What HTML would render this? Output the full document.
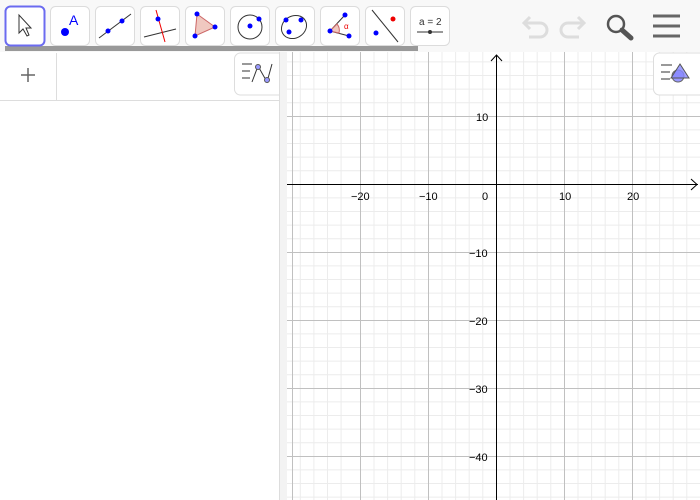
<!DOCTYPE html>
<html><head><style>
body{margin:0;width:700px;height:500px;overflow:hidden;font-family:"Liberation Sans",sans-serif;background:#fff;position:relative}
.tb{position:absolute;left:0;top:0;width:700px;height:52px;background:#f8f8f8}
</style></head><body>
<div class="tb"></div>
<div style="position:absolute;left:5px;top:46px;width:413px;height:5px;background:#999"></div>
<svg width="700" height="500" style="position:absolute;left:0;top:0">
<g fill="#fff" stroke="#dcdcdc">
<rect x="5.5" y="6.5" width="39" height="39" rx="5" stroke="#6b6bf0" stroke-width="2"/>
<rect x="50.5" y="6.5" width="39" height="39" rx="5"/>
<rect x="95.5" y="6.5" width="39" height="39" rx="5"/>
<rect x="140.5" y="6.5" width="39" height="39" rx="5"/>
<rect x="185.5" y="6.5" width="39" height="39" rx="5"/>
<rect x="230.5" y="6.5" width="39" height="39" rx="5"/>
<rect x="275.5" y="6.5" width="39" height="39" rx="5"/>
<rect x="320.5" y="6.5" width="39" height="39" rx="5"/>
<rect x="365.5" y="6.5" width="39" height="39" rx="5"/>
<rect x="410.5" y="6.5" width="39" height="39" rx="5"/>
</g>
<path d="M19 15 L19 33 L23 29 L27 36 L29 35 L26 28 L31 28 Z" fill="#fff" stroke="#333"/>
<circle cx="65" cy="32" r="4" fill="#00f"/><text x="69" y="25" font-size="14" fill="#00f">A</text>
<line x1="99" y1="38" x2="131" y2="14" stroke="#333"/><circle cx="108" cy="31" r="2.5" fill="#00f"/><circle cx="122" cy="21" r="2.5" fill="#00f"/>
<line x1="144" y1="37" x2="176" y2="29" stroke="#333"/><line x1="156" y1="10" x2="165" y2="42" stroke="#e00"/><circle cx="158" cy="19" r="2.5" fill="#00f"/>
<path d="M197 14 L215 27 L195 36 Z" fill="#f0c8c0" stroke="#c66"/><circle cx="197" cy="14" r="2.5" fill="#00f"/><circle cx="215" cy="27" r="2.5" fill="#00f"/><circle cx="195" cy="36" r="2.5" fill="#00f"/>
<circle cx="250" cy="27" r="12" fill="none" stroke="#333"/><circle cx="250" cy="26" r="2.5" fill="#00f"/><circle cx="259" cy="19" r="2.5" fill="#00f"/>
<ellipse cx="294" cy="27" rx="13" ry="11" transform="rotate(-30 294 27)" fill="none" stroke="#333"/><circle cx="286" cy="20" r="2.5" fill="#00f"/><circle cx="301" cy="20" r="2.5" fill="#00f"/><circle cx="289" cy="32" r="2.5" fill="#00f"/>
<path d="M330 31 L345 15 M330 31 L349 36" stroke="#333" fill="none"/><path d="M330 31 L337 24 A10 10 0 0 1 339 33 Z" fill="#f0c8c0" stroke="#c66"/><circle cx="330" cy="31" r="2.5" fill="#00f"/><circle cx="345" cy="15" r="2.5" fill="#00f"/><circle cx="349" cy="36" r="2.5" fill="#00f"/><text x="344" y="29" font-size="8" fill="#e00">α</text>
<line x1="372" y1="10" x2="398" y2="42" stroke="#333"/><circle cx="376" cy="33" r="2.5" fill="#00f"/><circle cx="393" cy="19" r="2.5" fill="#e00"/>
<text x="419" y="25" font-size="10" fill="#333">a = 2</text><line x1="417" y1="32" x2="443" y2="32" stroke="#333"/><circle cx="430" cy="32" r="2" fill="#333"/>
<path d="M524 23 L540 23 A7 7 0 0 1 540 37 L529 37 M530 17 L524 23 L530 29" fill="none" stroke="#ddd" stroke-width="3"/>
<path d="M584 23 L568 23 A7 7 0 0 0 568 37 L579 37 M578 17 L584 23 L578 29" fill="none" stroke="#ddd" stroke-width="3"/>
<circle cx="616" cy="24" r="8" fill="none" stroke="#555" stroke-width="2.5"/><line x1="622" y1="30" x2="631" y2="38" stroke="#555" stroke-width="5" stroke-linecap="round"/>
<g stroke="#666" stroke-width="3"><line x1="653" y1="16" x2="680" y2="16"/><line x1="653" y1="26" x2="680" y2="26"/><line x1="653" y1="36" x2="680" y2="36"/></g>
<line x1="0" y1="100.5" x2="279" y2="100.5" stroke="#ddd"/>
<line x1="56.5" y1="53" x2="56.5" y2="100" stroke="#ddd"/>
<path d="M21 75 H35 M28 68 V82" stroke="#666" stroke-width="1.5"/>
<rect x="234.5" y="53" width="50" height="42" rx="6" fill="#fff" stroke="#ddd"/>
<g stroke="#999" stroke-width="2"><line x1="242" y1="64" x2="252" y2="64"/><line x1="242" y1="71" x2="250" y2="71"/><line x1="242" y1="78" x2="250" y2="78"/></g>
<path d="M252 82 L258 66 L267 82 L272 64" fill="none" stroke="#333"/><circle cx="258" cy="67" r="2.5" fill="#99f" stroke="#555"/><circle cx="267" cy="80" r="2.5" fill="#99f" stroke="#555"/>
<rect x="279" y="52" width="8" height="448" fill="#f3f3f3"/>
<line x1="279.5" y1="52" x2="279.5" y2="500" stroke="#ddd"/>
<g stroke="#ececec">
<line x1="300.3" y1="52" x2="300.3" y2="500"/><line x1="313.9" y1="52" x2="313.9" y2="500"/><line x1="327.5" y1="52" x2="327.5" y2="500"/><line x1="341.1" y1="52" x2="341.1" y2="500"/>
<line x1="374" y1="52" x2="374" y2="500"/><line x1="387.6" y1="52" x2="387.6" y2="500"/><line x1="401.2" y1="52" x2="401.2" y2="500"/><line x1="414.8" y1="52" x2="414.8" y2="500"/>
<line x1="442" y1="52" x2="442" y2="500"/><line x1="455.6" y1="52" x2="455.6" y2="500"/><line x1="469.2" y1="52" x2="469.2" y2="500"/><line x1="482.8" y1="52" x2="482.8" y2="500"/>
<line x1="510" y1="52" x2="510" y2="500"/><line x1="523.6" y1="52" x2="523.6" y2="500"/><line x1="537.2" y1="52" x2="537.2" y2="500"/><line x1="550.8" y1="52" x2="550.8" y2="500"/>
<line x1="578" y1="52" x2="578" y2="500"/><line x1="591.6" y1="52" x2="591.6" y2="500"/><line x1="605.2" y1="52" x2="605.2" y2="500"/><line x1="618.8" y1="52" x2="618.8" y2="500"/>
<line x1="646" y1="52" x2="646" y2="500"/><line x1="659.6" y1="52" x2="659.6" y2="500"/><line x1="673.2" y1="52" x2="673.2" y2="500"/><line x1="686.8" y1="52" x2="686.8" y2="500"/>
<line x1="287" y1="61.9" x2="700" y2="61.9"/><line x1="287" y1="75.5" x2="700" y2="75.5"/><line x1="287" y1="89.1" x2="700" y2="89.1"/><line x1="287" y1="102.7" x2="700" y2="102.7"/>
<line x1="287" y1="129.9" x2="700" y2="129.9"/><line x1="287" y1="143.5" x2="700" y2="143.5"/><line x1="287" y1="157.1" x2="700" y2="157.1"/><line x1="287" y1="170.7" x2="700" y2="170.7"/>
<line x1="287" y1="197.9" x2="700" y2="197.9"/><line x1="287" y1="211.5" x2="700" y2="211.5"/><line x1="287" y1="225.1" x2="700" y2="225.1"/><line x1="287" y1="238.7" x2="700" y2="238.7"/>
<line x1="287" y1="265.9" x2="700" y2="265.9"/><line x1="287" y1="279.5" x2="700" y2="279.5"/><line x1="287" y1="293.1" x2="700" y2="293.1"/><line x1="287" y1="306.7" x2="700" y2="306.7"/>
<line x1="287" y1="333.9" x2="700" y2="333.9"/><line x1="287" y1="347.5" x2="700" y2="347.5"/><line x1="287" y1="361.1" x2="700" y2="361.1"/><line x1="287" y1="374.7" x2="700" y2="374.7"/>
<line x1="287" y1="401.9" x2="700" y2="401.9"/><line x1="287" y1="415.5" x2="700" y2="415.5"/><line x1="287" y1="429.1" x2="700" y2="429.1"/><line x1="287" y1="442.7" x2="700" y2="442.7"/>
<line x1="287" y1="469.9" x2="700" y2="469.9"/><line x1="287" y1="483.5" x2="700" y2="483.5"/><line x1="287" y1="497.1" x2="700" y2="497.1"/>
</g>
<g stroke="#c0c0c0">
<line x1="292.5" y1="52" x2="292.5" y2="500"/><line x1="360.5" y1="52" x2="360.5" y2="500"/><line x1="428.5" y1="52" x2="428.5" y2="500"/><line x1="564.5" y1="52" x2="564.5" y2="500"/><line x1="632.5" y1="52" x2="632.5" y2="500"/>
<line x1="287" y1="116.5" x2="700" y2="116.5"/><line x1="287" y1="252.5" x2="700" y2="252.5"/><line x1="287" y1="320.5" x2="700" y2="320.5"/><line x1="287" y1="388.5" x2="700" y2="388.5"/><line x1="287" y1="456.5" x2="700" y2="456.5"/>
</g>
<g stroke="#000" fill="none">
<line x1="287" y1="184.5" x2="698" y2="184.5"/><path d="M691 179 L697 184.5 L691 190"/>
<line x1="496.5" y1="55" x2="496.5" y2="500"/><path d="M491 61 L496.5 55 L502 61"/>
</g>
<g font-size="11" fill="#000">
<text x="351" y="200">−20</text><text x="419" y="200">−10</text><text x="482" y="200">0</text><text x="559" y="200">10</text><text x="627" y="200">20</text>
<text x="476" y="121">10</text><text x="469" y="257">−10</text><text x="469" y="325">−20</text><text x="469" y="393">−30</text><text x="469" y="461">−40</text>
</g>
<rect x="653.5" y="53" width="52" height="42" rx="6" fill="#fff" stroke="#ddd"/>
<g stroke="#999" stroke-width="2"><line x1="661" y1="65" x2="672" y2="65"/><line x1="661" y1="72" x2="670" y2="72"/><line x1="661" y1="79" x2="670" y2="79"/></g>
<circle cx="678" cy="76" r="6" fill="#99f" stroke="#666"/><path d="M680 64 L689 78 L671 78 Z" fill="#88f" fill-opacity=".8" stroke="#555"/>
</svg>
</body></html>
